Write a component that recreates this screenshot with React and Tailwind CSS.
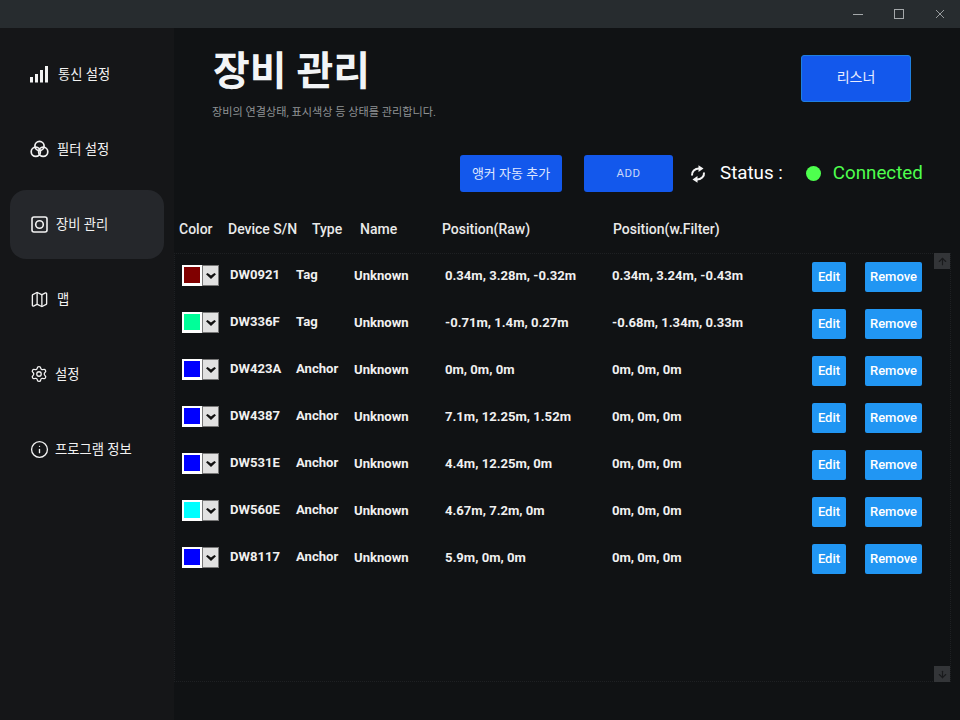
import React from "react";
import { Map, Settings, Info, ArrowUp, ArrowDown } from "lucide-react";

const devices = [
  { color: "bg-[#800000]", sn: "DW0921", type: "Tag", raw: "0.34m, 3.28m, -0.32m", filter: "0.34m, 3.24m, -0.43m" },
  { color: "bg-[#00ff99]", sn: "DW336F", type: "Tag", raw: "-0.71m, 1.4m, 0.27m", filter: "-0.68m, 1.34m, 0.33m" },
  { color: "bg-[#0000ff]", sn: "DW423A", type: "Anchor", raw: "0m, 0m, 0m", filter: "0m, 0m, 0m" },
  { color: "bg-[#0000ff]", sn: "DW4387", type: "Anchor", raw: "7.1m, 12.25m, 1.52m", filter: "0m, 0m, 0m" },
  { color: "bg-[#0000ff]", sn: "DW531E", type: "Anchor", raw: "4.4m, 12.25m, 0m", filter: "0m, 0m, 0m" },
  { color: "bg-[#00ffff]", sn: "DW560E", type: "Anchor", raw: "4.67m, 7.2m, 0m", filter: "0m, 0m, 0m" },
  { color: "bg-[#0000ff]", sn: "DW8117", type: "Anchor", raw: "5.9m, 0m, 0m", filter: "0m, 0m, 0m" },
];

const SignalIcon = () => (
  <svg width="19" height="17" viewBox="0 0 19 17" fill="#f2f2f2">
    <rect x="0" y="11" width="3" height="5.5" />
    <rect x="5" y="8" width="3" height="8.5" />
    <rect x="10" y="4" width="3" height="12.5" />
    <rect x="15" y="0" width="3" height="16.5" />
  </svg>
);

const FilterIcon = () => (
  <svg width="19" height="18" viewBox="0 0 19 18" fill="none" stroke="#f2f2f2" strokeWidth="1.7">
    <circle cx="9.5" cy="6" r="4.6" />
    <circle cx="5.8" cy="11.8" r="4.6" />
    <circle cx="13.2" cy="11.8" r="4.6" />
  </svg>
);

const DeviceIcon = () => (
  <svg width="17" height="17" viewBox="0 0 17 17" fill="none" stroke="#f2f2f2" strokeWidth="1.6">
    <rect x="1" y="1" width="15" height="15" rx="2" />
    <circle cx="8.5" cy="8.5" r="3.8" />
  </svg>
);

const SyncIcon = () => (
  <svg width="16" height="18" viewBox="0 0 16 18" className="ml-[17px]">
    <path d="M2 10.5 C1.5 6.5 5 3.5 9 3.5" fill="none" stroke="#f4f4f4" strokeWidth="2" />
    <path d="M8.5 0.3 L13.5 3.5 L8.5 7 Z" fill="#f4f4f4" />
    <path d="M14 7.5 C14.5 11.5 11 14.5 7 14.5" fill="none" stroke="#f4f4f4" strokeWidth="2" />
    <path d="M7.5 17.7 L2.5 14.5 L7.5 11 Z" fill="#f4f4f4" />
  </svg>
);

const menu = [
  { label: "통신 설정", icon: <SignalIcon />, text: "ml-[9px]" },
  { label: "필터 설정", icon: <FilterIcon />, text: "ml-[8px]" },
  { label: "장비 관리", icon: <DeviceIcon />, text: "ml-[7px]", active: true },
  { label: "맵", icon: <Map size={19} strokeWidth={1.7} color="#f2f2f2" />, text: "ml-[8px]" },
  { label: "설정", icon: <Settings size={18} strokeWidth={1.7} color="#f2f2f2" />, text: "ml-[6px]" },
  { label: "프로그램 정보", icon: <Info size={19} strokeWidth={1.7} color="#f2f2f2" />, text: "ml-[6px]" },
];

const App = () => {
  return (
    <div className="w-[960px] h-[720px] flex flex-col overflow-hidden bg-[#101214] text-white font-['Roboto','Noto_Sans_CJK_KR',sans-serif]">
      {/* Title bar */}
      <div className="h-[28px] shrink-0 bg-[#272c2f] flex items-center justify-end text-[#a4a8aa]">
        <div className="w-[41px] flex justify-center">
          <svg width="10" height="10" viewBox="0 0 10 10" stroke="currentColor"><path d="M0 5.5H10" /></svg>
        </div>
        <div className="w-[41px] flex justify-center">
          <svg width="10" height="10" viewBox="0 0 10 10" fill="none" stroke="currentColor"><rect x="0.5" y="0.5" width="9" height="9" /></svg>
        </div>
        <div className="w-[41px] flex justify-center">
          <svg width="10" height="10" viewBox="0 0 10 10" stroke="currentColor" strokeWidth="0.9"><path d="M1 1L9 9M9 1L1 9" /></svg>
        </div>
      </div>

      <div className="flex-1 flex min-h-0">
        {/* Sidebar */}
        <div className="w-[174px] shrink-0 bg-[#151618] px-[10px] pt-[12px] flex flex-col gap-[6px]">
          {menu.map((item) => (
            <div
              key={item.label}
              className={`h-[69px] rounded-[16px] pl-[19px] pb-[1px] flex items-center text-[13.3px] text-[#f2f2f2] ${item.active ? "bg-[#25272b]" : ""}`}
            >
              <div className="w-[20px] flex justify-center">{item.icon}</div>
              <span className={`mt-[2px] ${item.text}`}>{item.label}</span>
            </div>
          ))}
        </div>

        {/* Main */}
        <div className="flex-1 min-w-0 flex flex-col">
          <div className="h-[100px] shrink-0 flex justify-between pl-[39px] pr-[49px]">
            <div>
              <h1 className="mt-[16px] text-[40px] leading-[56px] font-bold text-[#f2f4f6]">장비 관리</h1>
              <p className="mt-[4px] -ml-[1px] text-[11.15px] leading-[17px] text-[#8f9295]">장비의 연결상태, 표시색상 등 상태를 관리합니다.</p>
            </div>
            <button className="mt-[27px] w-[110px] h-[47px] rounded-[3px] bg-[#1358ec] border border-[#1f7fe0] text-[14px] pb-[2px] text-[#e8ecff]">
              리스너
            </button>
          </div>

          <div className="h-[37px] mt-[27px] shrink-0 flex items-center pl-[286px]">
            <button className="w-[102px] h-[37px] rounded-[3px] bg-[#1358ec] text-[13px] text-[#dfe6ff]">앵커 자동 추가</button>
            <button className="ml-[22px] w-[89px] h-[37px] rounded-[3px] bg-[#1358ec] text-[11.5px] tracking-[0.4px] text-[#c9d6f8]">ADD</button>
            <SyncIcon />
            <span className="ml-[14px] text-[18.75px]">Status :</span>
            <span className="ml-[23px] w-[15px] h-[15px] rounded-full bg-[#4eff4e]" />
            <span className="ml-[12px] text-[18.75px] text-[#4eff4e]">Connected</span>
          </div>

          {/* Table header */}
          <div className="h-[61px] shrink-0 flex items-center pt-[13px] text-[14px] font-medium text-[#e9e9e9]">
            <span className="ml-[5px] w-[49px]">Color</span>
            <span className="w-[84px]">Device S/N</span>
            <span className="w-[48px]">Type</span>
            <span className="w-[82px]">Name</span>
            <span className="w-[171px]">Position(Raw)</span>
            <span>Position(w.Filter)</span>
          </div>

          {/* Table body */}
          <div className="relative w-[777px] h-[429px] shrink-0 border border-dotted border-[#1e2023] text-[13.1px] font-bold text-[#f0f0f0]">
            <div className="pt-[8px] flex flex-col gap-[17px]">
              {devices.map((d) => (
                <div key={d.sn} className="h-[30px] flex items-center">
                  <div className="ml-[7px] -mt-[3px] w-[37px] h-[21px] flex">
                    <div className="w-[20px] bg-white p-[2px] pb-[3px]">
                      <div className={`w-full h-full ${d.color}`} />
                    </div>
                    <div className="flex-1 flex items-center justify-center bg-[#e1e1e1] border border-[#777]">
                      <svg width="10" height="6" viewBox="0 0 10 6" fill="#111"><path d="M0 1.2L1.6 0L5 2.4L8.4 0L10 1.2L5 6Z" /></svg>
                    </div>
                  </div>
                  <span className="ml-[11px] w-[66px] -mt-[5px]">{d.sn}</span>
                  <span className="w-[58px] -mt-[4px]">{d.type}</span>
                  <span className="w-[91px] -mt-[2px]">Unknown</span>
                  <span className="w-[167px] -mt-[3px]">{d.raw}</span>
                  <span className="w-[200px] -mt-[3px]">{d.filter}</span>
                  <button className="w-[34px] h-[30px] rounded-[2px] bg-[#2196f3] pb-[1px] text-[13px] font-medium text-white">Edit</button>
                  <button className="ml-[19px] w-[57px] h-[30px] rounded-[2px] bg-[#2196f3] pb-[1px] text-[13px] font-medium text-white">Remove</button>
                </div>
              ))}
            </div>
            {/* Scrollbar arrows */}
            <div className="absolute right-0 -top-px w-[16px] h-[16px] bg-[#333538] flex items-center justify-center">
              <ArrowUp size={11} color="#191a1c" strokeWidth={2.5} />
            </div>
            <div className="absolute right-0 -bottom-px w-[16px] h-[16px] bg-[#333538] flex items-center justify-center">
              <ArrowDown size={11} color="#191a1c" strokeWidth={2.5} />
            </div>
          </div>
        </div>
      </div>
    </div>
  );
};

export default App;
